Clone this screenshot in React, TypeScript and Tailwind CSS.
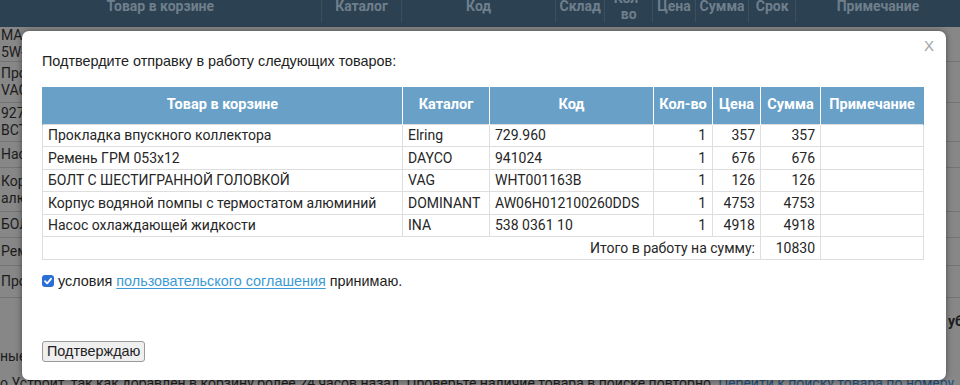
import React from "react";

const bgRows: { h: number; l: string[]; }[] = [
  { h: 35, l: ["МАС", "5W-"] },
  { h: 41, l: ["Про", "VAG"] },
  { h: 39, l: ["927", "ВСТ"] },
  { h: 26, l: ["Нас"] },
  { h: 44, l: ["Кор", "алю"] },
  { h: 26, l: ["БОЛ"] },
  { h: 28, l: ["Рем"] },
  { h: 32, l: ["Про"] },
];

const items = [
  ["Прокладка впускного коллектора", "Elring", "729.960", "1", "357", "357"],
  ["Ремень ГРМ 053x12", "DAYCO", "941024", "1", "676", "676"],
  ["БОЛТ С ШЕСТИГРАННОЙ ГОЛОВКОЙ", "VAG", "WHT001163B", "1", "126", "126"],
  ["Корпус водяной помпы с термостатом алюминий", "DOMINANT", "AW06H012100260DDS", "1", "4753", "4753"],
  ["Насос охлаждающей жидкости", "INA", "538 0361 10", "1", "4918", "4918"],
];

const arial = { fontFamily: "'Liberation Sans', Arial, sans-serif" };

export default function App() {
  return (
    <div
      className="relative w-[960px] h-[385px] overflow-hidden bg-[#878787] text-[#1c1c1c]"
      style={{ fontFamily: "Roboto, 'Liberation Sans', sans-serif" }}
    >
      {/* background page */}
      <div className="flex flex-col">
        <div className="h-[27px] bg-[#2c4152] overflow-hidden">
          <div className="-mt-[11px] h-[33px] flex text-[14px] font-bold text-[#6f7f8c] leading-[16px]">
            <div className="w-[331px] flex items-center justify-center border-r border-[#3c5060]">Товар в корзине</div>
            <div className="w-[83px] flex items-center justify-center border-r border-[#3c5060]">Каталог</div>
            <div className="w-[158px] flex items-center justify-center border-r border-[#3c5060]">Код</div>
            <div className="w-[51px] flex items-center justify-center border-r border-[#3c5060]">Склад</div>
            <div className="w-[49px] flex items-center justify-center text-center border-r border-[#3c5060]">Кол-<br />во</div>
            <div className="w-[44px] flex items-center justify-center border-r border-[#3c5060]">Цена</div>
            <div className="w-[55px] flex items-center justify-center border-r border-[#3c5060]">Сумма</div>
            <div className="w-[48px] flex items-center justify-center border-r border-[#3c5060]">Срок</div>
            <div className="w-[164px] shrink-0 flex items-center justify-center">Примечание</div>
          </div>
        </div>
        {bgRows.map((r, i) => (
          <div
            key={i}
            className="flex items-center border-b border-[#747474] text-[14px] leading-[17px]"
            style={{ height: r.h }}
          >
            <div className="pl-[1px] w-[22px] overflow-hidden whitespace-nowrap">
              {r.l.map((t, j) => (
                <div key={j}>{t}</div>
              ))}
            </div>
          </div>
        ))}
        <div className="mt-[15px] h-[17px] flex justify-end text-[14px] font-bold leading-[17px]">
          <span className="w-[12px] overflow-hidden whitespace-nowrap">уб</span>
        </div>
        <div className="mt-[18px] h-[17px] w-[22px] overflow-hidden text-[14px] leading-[17px] whitespace-nowrap">ные</div>
        <div className="mt-[10px] text-[14px] leading-[17px] whitespace-nowrap">
          о Устроит, так как добавлен в корзину более 24 часов назад. Проверьте наличие товара в поиске повторно.{" "}
          <span className="text-[#1f4f7a]">Перейти к поиску товара по номеру</span>
        </div>
      </div>

      {/* modal */}
      <div className="absolute left-[22px] top-[31px] w-[924px] h-[349px] bg-white rounded-[7px] shadow-[0_0_6px_rgba(0,0,0,0.45)]">
        <div className="absolute right-[12px] top-[7px] text-[15px] text-[#a3a3a3] leading-[16px]" style={arial}>
          X
        </div>
        <div className="flex flex-col pl-[20px] pt-[22px]">
          <div className="text-[14.4px] leading-[17px] text-[#222]" style={arial}>
            Подтвердите отправку в работу следующих товаров:
          </div>
          <table className="mt-[17px] w-[881px] table-fixed border-collapse text-[14px] text-[#262626]">
            <colgroup>
              <col className="w-[360px]" />
              <col className="w-[87px]" />
              <col className="w-[164px]" />
              <col className="w-[59px]" />
              <col className="w-[48px]" />
              <col className="w-[60px]" />
              <col className="w-[103px]" />
            </colgroup>
            <thead>
              <tr className="h-[37px] bg-[#68a0c8] text-white font-bold text-[14.5px]">
                {["Товар в корзине", "Каталог", "Код", "Кол-во", "Цена", "Сумма", "Примечание"].map((h, i) => (
                  <th key={i} className="border-x border-white first:border-l-[#68a0c8] last:border-r-[#68a0c8] px-[2px] text-center font-bold whitespace-nowrap">
                    {h}
                  </th>
                ))}
              </tr>
            </thead>
            <tbody>
              {items.map((r, i) => (
                <tr key={i} className="h-[22.5px] leading-[16px]">
                  <td className="border border-[#dedede] px-[5px] whitespace-nowrap">{r[0]}</td>
                  <td className="border border-[#dedede] px-[5px] whitespace-nowrap">{r[1]}</td>
                  <td className="border border-[#dedede] px-[5px] whitespace-nowrap">{r[2]}</td>
                  <td className="border border-[#dedede] px-[6px] text-right">{r[3]}</td>
                  <td className="border border-[#dedede] px-[5px] text-right">{r[4]}</td>
                  <td className="border border-[#dedede] px-[5px] text-right">{r[5]}</td>
                  <td className="border border-[#dedede]"></td>
                </tr>
              ))}
              <tr className="h-[22.5px] leading-[16px]">
                <td colSpan={5} className="border border-[#dedede] px-[5px] text-right">Итого в работу на сумму:</td>
                <td className="border border-[#dedede] px-[5px] text-right">10830</td>
                <td className="border border-[#dedede]"></td>
              </tr>
            </tbody>
          </table>
          <div className="mt-[13px] flex items-center text-[14.4px] leading-[17px] text-[#1e1e1e]" style={arial}>
            <span className="w-[12px] h-[12px] rounded-[3px] bg-[#2b6fd6] flex items-center justify-center">
              <svg width="10" height="10" viewBox="0 0 10 10">
                <path d="M2 5.2 L4.2 7.3 L8 2.8" fill="none" stroke="white" strokeWidth="1.8" strokeLinecap="round" strokeLinejoin="round" />
              </svg>
            </span>
            <span className="ml-[4px]">
              условия{" "}
              <span className="text-[#3b9ad6] underline underline-offset-2">пользовательского соглашения</span>{" "}
              принимаю.
            </span>
          </div>
          <div className="mt-[49px]">
            <button
              className="h-[21px] px-[4px] border border-[#9a9a9a] rounded-[3px] bg-[#efefef] text-[14.4px] leading-[17px] text-[#222]"
              style={arial}
            >
              Подтверждаю
            </button>
          </div>
        </div>
      </div>
    </div>
  );
}
